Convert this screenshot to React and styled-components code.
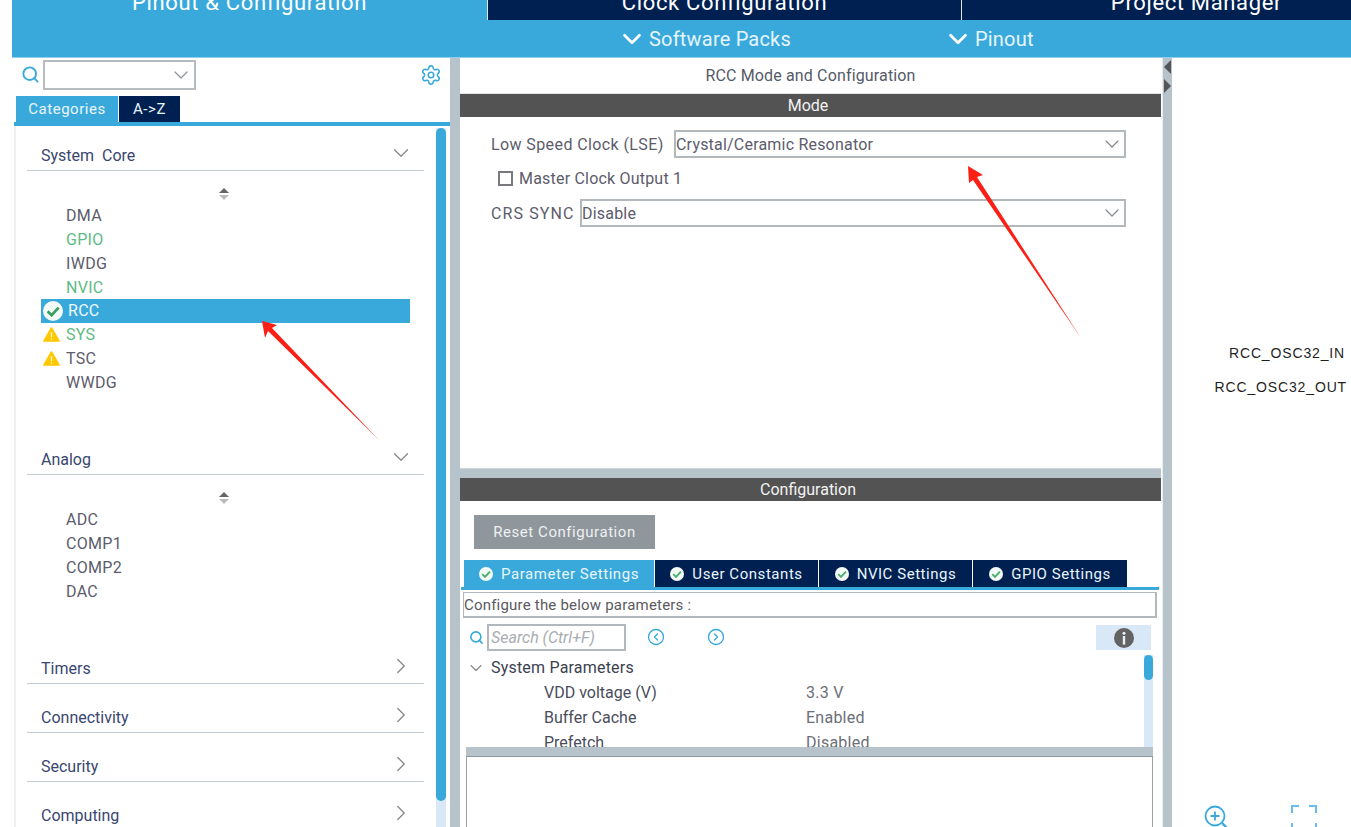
import React from 'react'
import styled, { createGlobalStyle } from 'styled-components'
import { ChevronDown, ChevronRight, Search, Settings, CircleChevronLeft, CircleChevronRight } from 'lucide-react'

const GlobalStyle = createGlobalStyle`
  html, body { margin: 0; padding: 0; background: #fff; overflow: hidden; }
  * { box-sizing: border-box; }
`

const Page = styled.div`
  position: relative;
  width: 1351px;
  height: 827px;
  overflow: hidden;
  padding-left: 12px;
  font-family: Roboto, "Liberation Sans", sans-serif;
  background: #fff;
`

const TopTabs = styled.div`
  display: flex;
  height: 20px;
  background: #002052;
`

const TopTab = styled.div`
  width: ${p => p.$w}px;
  height: 20px;
  overflow: hidden;
  display: flex;
  justify-content: center;
  align-items: flex-end;
  background: ${p => (p.$active ? '#39a9dc' : '#002052')};
  border-left: ${p => (p.$active ? 'none' : '1px solid #dfe6ee')};
  color: #fff;
  font-size: 22px;
  letter-spacing: 0.65px;
  line-height: 26px;
  white-space: nowrap;
  span { display: block; margin: 0 0 4px ${p => p.$shift || 0}px; }
`

const SubBar = styled.div`
  height: 38px;
  background: #39a9dc;
  border-bottom: 1px solid #8fd0ee;
  display: flex;
  color: #e6f5fc;
  font-size: 20px;
  letter-spacing: 0.2px;
`

const SubItem = styled.div`
  display: flex;
  align-items: center;
  gap: 2px;
  margin-left: ${p => p.$ml}px;
  height: 37px;
`

const Body = styled.div`
  display: flex;
  height: 770px;
`

const LeftPanel = styled.div`
  width: 438px;
  height: 770px;
  overflow: hidden;
  flex: none;
`

const SearchRow = styled.div`
  display: flex;
  align-items: center;
  height: 38px;
  padding: 0 0 5px 9px;
  gap: 3px;
  color: #39a9dc;
`

const SearchSelect = styled.div`
  width: 153px;
  height: 30px;
  border: 2px solid #b7bcc0;
  display: flex;
  align-items: center;
  justify-content: flex-end;
  padding-right: 1px;
  color: #8d9297;
`

const GearWrap = styled.div`
  margin-left: auto;
  margin-right: 8px;
  display: flex;
`

const Tabs = styled.div`
  display: flex;
  height: 26px;
  padding-left: 4px;
  gap: 1px;
`

const Tab = styled.div`
  width: ${p => p.$w}px;
  height: 26px;
  display: flex;
  align-items: center;
  justify-content: center;
  background: ${p => (p.$active ? '#39a9dc' : '#002052')};
  color: #e9f5fb;
  font-size: 15px;
  letter-spacing: 0.55px;
`

const TabLine = styled.div`
  height: 4px;
  margin-left: 2px;
  background: #39a9dc;
`

const ListFrame = styled.div`
  position: relative;
  height: 702px;
  margin-left: 2px;
  border-left: 2px solid #eef0f3;
  padding-left: 11px;
`

const ScrollTrack = styled.div`
  position: absolute;
  right: ${p => p.$right}px;
  top: ${p => p.$top}px;
  bottom: 0;
  width: ${p => p.$w}px;
  background: #d8e8f6;
`

const ScrollThumb = styled.div`
  height: ${p => p.$h}px;
  border-radius: 5px;
  background: #39a9dc;
`

const CategoryHead = styled.div`
  width: 397px;
  height: ${p => p.$h || 49}px;
  border-bottom: 1px solid #c1cbd4;
  display: flex;
  align-items: flex-end;
  justify-content: space-between;
  padding: 0 10px 4px 14px;
  color: #39466f;
  font-size: 16px;
  line-height: 20px;
  word-spacing: 4px;
  svg { color: #85888c; }
`

const CategoryBody = styled.div`
  height: ${p => p.$h}px;
  padding-top: 17px;
`

const SortArrows = styled.div`
  width: 12px;
  height: 16px;
  margin-left: 191px;
  display: flex;
  flex-direction: column;
  align-items: center;
  gap: 2px;
  &::before, &::after {
    content: '';
    border-left: 5px solid transparent;
    border-right: 5px solid transparent;
  }
  &::before { border-bottom: 5px solid #666; }
  &::after { border-top: 5px solid #bbb; }
`

const Item = styled.div`
  display: flex;
  align-items: center;
  width: 369px;
  height: 23.75px;
  margin-left: 14px;
  font-size: 16px;
  letter-spacing: 0.3px;
  background: ${p => (p.$selected ? '#39a9dc' : 'transparent')};
  color: ${p => (p.$selected ? '#eef8fd' : p.$green ? '#5dbb84' : '#5c5c6c')};
  span { margin-left: ${p => (p.$selected ? 5 : p.$icon ? 6 : 25)}px; }
  svg { flex: none; margin-left: 2px; }
`

const Splitter = styled.div`
  position: relative;
  width: ${p => p.$w}px;
  flex: none;
  background: #b7c3ca;
`

const Triangle = styled.div`
  position: absolute;
  left: 1px;
  top: ${p => p.$top}px;
  border-top: 7px solid transparent;
  border-bottom: 7px solid transparent;
  border-left: ${p => (p.$right ? '7px solid #555' : 'none')};
  border-right: ${p => (p.$right ? 'none' : '7px solid #555')};
`

const CenterPanel = styled.div`
  width: 703px;
  flex: none;
  height: 770px;
  overflow: hidden;
  padding-right: 1px;
  border-right: 1px solid #e6ecf1;
  color: #5c5c6c;
  font-size: 16px;
`

const Title = styled.div`
  height: 36px;
  display: flex;
  align-items: center;
  justify-content: center;
  border-bottom: 1px solid #e4e4e4;
  color: #555a68;
  letter-spacing: 0.15px;
`

const DarkBar = styled.div`
  height: 23px;
  padding-right: 5px;
  background: #525352;
  color: #f2f2f2;
  display: flex;
  align-items: center;
  justify-content: center;
`

const ModePane = styled.div`
  height: 351px;
  padding: 13px 35px 0 31px;
`

const FormRow = styled.div`
  display: flex;
  align-items: center;
  height: 28px;
  white-space: nowrap;
  letter-spacing: 0.2px;
`

const FormLabel = styled.div`
  flex: none;
  width: ${p => p.$w}px;
  letter-spacing: ${p => p.$spacing}px;
`

const Select = styled.div`
  flex: 1;
  height: 28px;
  border: 2px solid #b3b8bc;
  display: flex;
  align-items: center;
  justify-content: space-between;
  padding: 0;
  svg { color: #85888c; }
`

const CheckRow = styled(FormRow)`
  padding-left: 7px;
  margin: 6px 0 7px;
`

const CheckBox = styled.div`
  width: 15px;
  height: 15px;
  margin-right: 6px;
  border: 2px solid #77797c;
`

const HSplit = styled.div`
  height: 10px;
  background: #b7c3ca;
  border-top: 1px solid #cdd5da;
`

const ConfigPane = styled.div`
  position: relative;
  height: 325px;
`

const ResetButton = styled.div`
  width: 181px;
  height: 34px;
  margin: 14px 0 11px 14px;
  background: #8f969c;
  color: #eef0f1;
  font-size: 15px;
  display: flex;
  align-items: center;
  justify-content: center;
  letter-spacing: 0.55px;
`

const ParamTabs = styled.div`
  display: flex;
  height: 27px;
  padding-left: 4px;
  gap: 1px;
`

const ParamTab = styled.div`
  width: ${p => p.$w}px;
  height: 27px;
  display: flex;
  align-items: center;
  justify-content: center;
  gap: 8px;
  background: ${p => (p.$active ? '#39a9dc' : '#002052')};
  color: #e9f5fb;
  font-size: 15px;
  letter-spacing: 0.55px;
`

const ParamLine = styled.div`
  height: 3px;
  margin: 0 2px 0 1px;
  background: #39a9dc;
`

const ParamField = styled.div`
  height: 26px;
  margin: 2px 4px 0 3px;
  border: 2px solid #b3b8bc;
  border-top-width: 1px;
  border-left-width: 1px;
  display: flex;
  align-items: center;
  font-size: 15px;
  letter-spacing: 0.2px;
  color: #5a5a60;
`

const FilterRow = styled.div`
  display: flex;
  align-items: center;
  height: 27px;
  margin-top: 6px;
  padding-left: 9px;
  color: #39a9dc;
`

const FilterInput = styled.div`
  width: 139px;
  height: 27px;
  margin-left: 3px;
  border: 2px solid #b3b8bc;
  display: flex;
  align-items: center;
  padding-left: 2px;
  color: #a9adb1;
  font-style: italic;
  white-space: nowrap;
`

const NavIcons = styled.div`
  display: flex;
  gap: 42px;
  margin: 0 0 2px 21px;
`

const InfoBox = styled.div`
  width: 55px;
  height: 25px;
  margin-left: auto;
  margin-right: 10px;
  background: #d8e8f6;
  display: flex;
  align-items: center;
  justify-content: center;
`

const TreeArea = styled.div`
  position: relative;
  height: 92px;
  margin: 4px 8px 0 6px;
  overflow: hidden;
`

const TreeHead = styled.div`
  display: flex;
  align-items: center;
  height: 25px;
  gap: 5px;
  color: #3c4150;
  letter-spacing: 0.2px;
  svg { color: #85888c; }
`

const TreeRow = styled.div`
  display: grid;
  grid-template-columns: 262px 1fr;
  height: 25px;
  line-height: 25px;
  padding-left: 78px;
  color: #4a4d5c;
  span:last-child { color: #6b6e76; letter-spacing: 0.25px; }
`

const BottomSplit = styled.div`
  height: 10px;
  margin: 0 8px 0 6px;
  background: #b7c3ca;
  border-bottom: 1px solid #8d979e;
`

const BottomBox = styled.div`
  height: 80px;
  margin: 0 8px 0 6px;
  border-left: 1px solid #9aa2a8;
  border-right: 1px solid #9aa2a8;
`

const PinCanvas = styled.div`
  flex: 1;
  height: 770px;
  overflow: hidden;
  padding-top: 285px;
  font-family: "Liberation Sans", Arial, sans-serif;
  font-size: 14px;
  color: #1f1f1f;
`

const PinLabel = styled.div`
  height: 34px;
  line-height: 20px;
  padding-right: ${p => p.$pr}px;
  text-align: right;
  letter-spacing: 0.85px;
`

const CanvasTools = styled.div`
  display: flex;
  align-items: flex-start;
  margin-top: 394px;
  padding-left: 32px;
  gap: 61px;
`

const Arrows = styled.svg`
  position: absolute;
  left: 0;
  top: 0;
  pointer-events: none;
`

const OkIcon = ({ size = 16, fg = '#3aa063', bg = '#f4fbf6' }) => (
  <svg width={size} height={size} viewBox="0 0 20 20">
    <circle cx="10" cy="10" r="10" fill={bg} />
    <path d="M4.6 10.2 8.6 14.2 15.6 6.6" fill="none" stroke={fg} strokeWidth="2.8" />
  </svg>
)

const WarnIcon = () => (
  <svg width="17" height="15" viewBox="0 0 17 15">
    <path d="M8.5 1 16 14H1Z" fill="#ffc800" stroke="#ffc800" strokeWidth="1.6" strokeLinejoin="round" />
    <path d="M8.5 5v5M8.5 11.2v1.4" stroke="#fff3c0" strokeWidth="1.4" />
  </svg>
)

const InfoIcon = () => (
  <svg width="20" height="20" viewBox="0 0 20 20">
    <circle cx="10" cy="10" r="10" fill="#636363" />
    <circle cx="10" cy="5.2" r="1.5" fill="#e8eef3" />
    <rect x="8.8" y="8" width="2.4" height="8.6" fill="#e8eef3" />
  </svg>
)

const ZoomInIcon = () => (
  <svg width="26" height="26" viewBox="0 0 26 26" fill="none" stroke="#39a9dc" strokeWidth="1.8">
    <circle cx="11" cy="11" r="9.5" />
    <path d="M11 6.5v9M6.5 11h9" />
    <path d="M18 18l6 6" strokeWidth="2.4" />
  </svg>
)

const FitIcon = () => (
  <svg width="26" height="26" viewBox="0 0 26 26" fill="none" stroke="#6cbde3" strokeWidth="2">
    <path d="M1 8V1h7M18 1h7v7M1 18v7h7M18 25h7v-7" />
  </svg>
)

const Category = ({ name, h, children, open, bodyH }) => (
  <>
    <CategoryHead $h={h}>
      <span>{name}</span>
      {open ? <ChevronDown size={26} strokeWidth={1.2} /> : <ChevronRight size={26} strokeWidth={1.2} />}
    </CategoryHead>
    {open && <CategoryBody $h={bodyH}>{children}</CategoryBody>}
  </>
)

function App() {
  const core = [
    { name: 'DMA' },
    { name: 'GPIO', green: true },
    { name: 'IWDG' },
    { name: 'NVIC', green: true },
    { name: 'RCC', selected: true, icon: 'ok' },
    { name: 'SYS', green: true, icon: 'warn' },
    { name: 'TSC', icon: 'warn' },
    { name: 'WWDG' },
  ]
  const analog = ['ADC', 'COMP1', 'COMP2', 'DAC']
  const paramTabs = [
    { name: 'Parameter Settings', w: 190, active: true },
    { name: 'User Constants', w: 163 },
    { name: 'NVIC Settings', w: 153 },
    { name: 'GPIO Settings', w: 154 },
  ]

  return (
    <Page>
      <GlobalStyle />
      <TopTabs>
        <TopTab $w={475} $active><span>Pinout &amp; Configuration</span></TopTab>
        <TopTab $w={474}><span>Clock Configuration</span></TopTab>
        <TopTab $w={390} $shift={80}><span>Project Manager</span></TopTab>
      </TopTabs>
      <SubBar>
        <SubItem $ml={605}><ChevronDown size={30} strokeWidth={2.2} color="#fff" />Software Packs</SubItem>
        <SubItem $ml={152}><ChevronDown size={30} strokeWidth={2.2} color="#fff" />Pinout</SubItem>
      </SubBar>
      <Body>
        <LeftPanel>
          <SearchRow>
            <Search size={19} strokeWidth={2.4} />
            <SearchSelect><ChevronDown size={24} strokeWidth={1.2} /></SearchSelect>
            <GearWrap><Settings size={22} strokeWidth={1.7} /></GearWrap>
          </SearchRow>
          <Tabs>
            <Tab $w={102} $active>Categories</Tab>
            <Tab $w={61}>A-&gt;Z</Tab>
          </Tabs>
          <TabLine />
          <ListFrame>
            <ScrollTrack $right={4} $top={2} $w={10}><ScrollThumb $h={673} /></ScrollTrack>
            <Category name="System Core" h={45} open bodyH={255}>
              <SortArrows />
              {core.map(it => (
                <Item key={it.name} $green={it.green} $selected={it.selected} $icon={it.icon}>
                  {it.icon === 'ok' && <OkIcon size={20} />}
                  {it.icon === 'warn' && <WarnIcon />}
                  <span>{it.name}</span>
                </Item>
              ))}
            </Category>
            <Category name="Analog" open bodyH={160}>
              <SortArrows />
              {analog.map(name => <Item key={name}><span>{name}</span></Item>)}
            </Category>
            <Category name="Timers" />
            <Category name="Connectivity" />
            <Category name="Security" />
            <Category name="Computing" />
          </ListFrame>
        </LeftPanel>
        <Splitter $w={10} />
        <CenterPanel>
          <Title>RCC Mode and Configuration</Title>
          <DarkBar>Mode</DarkBar>
          <ModePane>
            <FormRow>
              <FormLabel $w={183} $spacing={0.4}>Low Speed Clock (LSE)</FormLabel>
              <Select>Crystal/Ceramic Resonator<ChevronDown size={24} strokeWidth={1.2} /></Select>
            </FormRow>
            <CheckRow><CheckBox />Master Clock Output 1</CheckRow>
            <FormRow>
              <FormLabel $w={89} $spacing={1.1}>CRS SYNC</FormLabel>
              <Select>Disable<ChevronDown size={24} strokeWidth={1.2} /></Select>
            </FormRow>
          </ModePane>
          <HSplit />
          <ConfigPane>
            <DarkBar>Configuration</DarkBar>
            <ResetButton>Reset Configuration</ResetButton>
            <ParamTabs>
              {paramTabs.map(t => (
                <ParamTab key={t.name} $w={t.w} $active={t.active}>
                  <OkIcon size={14} fg="#4caf72" />
                  {t.name}
                </ParamTab>
              ))}
            </ParamTabs>
            <ParamLine />
            <ParamField>Configure the below parameters :</ParamField>
            <FilterRow>
              <Search size={15} strokeWidth={2.6} />
              <FilterInput>Search (Ctrl+F)</FilterInput>
              <NavIcons>
                <CircleChevronLeft size={18} strokeWidth={1.8} />
                <CircleChevronRight size={18} strokeWidth={1.8} />
              </NavIcons>
              <InfoBox><InfoIcon /></InfoBox>
            </FilterRow>
            <TreeArea>
              <ScrollTrack $right={0} $top={0} $w={9}><ScrollThumb $h={25} /></ScrollTrack>
              <TreeHead><ChevronDown size={20} strokeWidth={1.4} />System Parameters</TreeHead>
              <TreeRow><span>VDD voltage (V)</span><span>3.3 V</span></TreeRow>
              <TreeRow><span>Buffer Cache</span><span>Enabled</span></TreeRow>
              <TreeRow><span>Prefetch</span><span>Disabled</span></TreeRow>
            </TreeArea>
            <BottomSplit />
            <BottomBox />
          </ConfigPane>
        </CenterPanel>
        <Splitter $w={9}>
          <Triangle $top={2} />
          <Triangle $top={21} $right />
        </Splitter>
        <PinCanvas>
          <PinLabel $pr={6}>RCC_OSC32_IN</PinLabel>
          <PinLabel $pr={4}>RCC_OSC32_OUT</PinLabel>
          <CanvasTools>
            <ZoomInIcon />
            <FitIcon />
          </CanvasTools>
        </PinCanvas>
      </Body>
      <Arrows width="1351" height="827" viewBox="0 0 1351 827">
        <path d="M262 321 277 325 272 328 379 440 268 331 265 338Z" fill="#fb1f14" />
        <path d="M968 166 983 175 977 177 1081 338 973 180 969 183Z" fill="#fb1f14" />
      </Arrows>
    </Page>
  )
}

export default App
